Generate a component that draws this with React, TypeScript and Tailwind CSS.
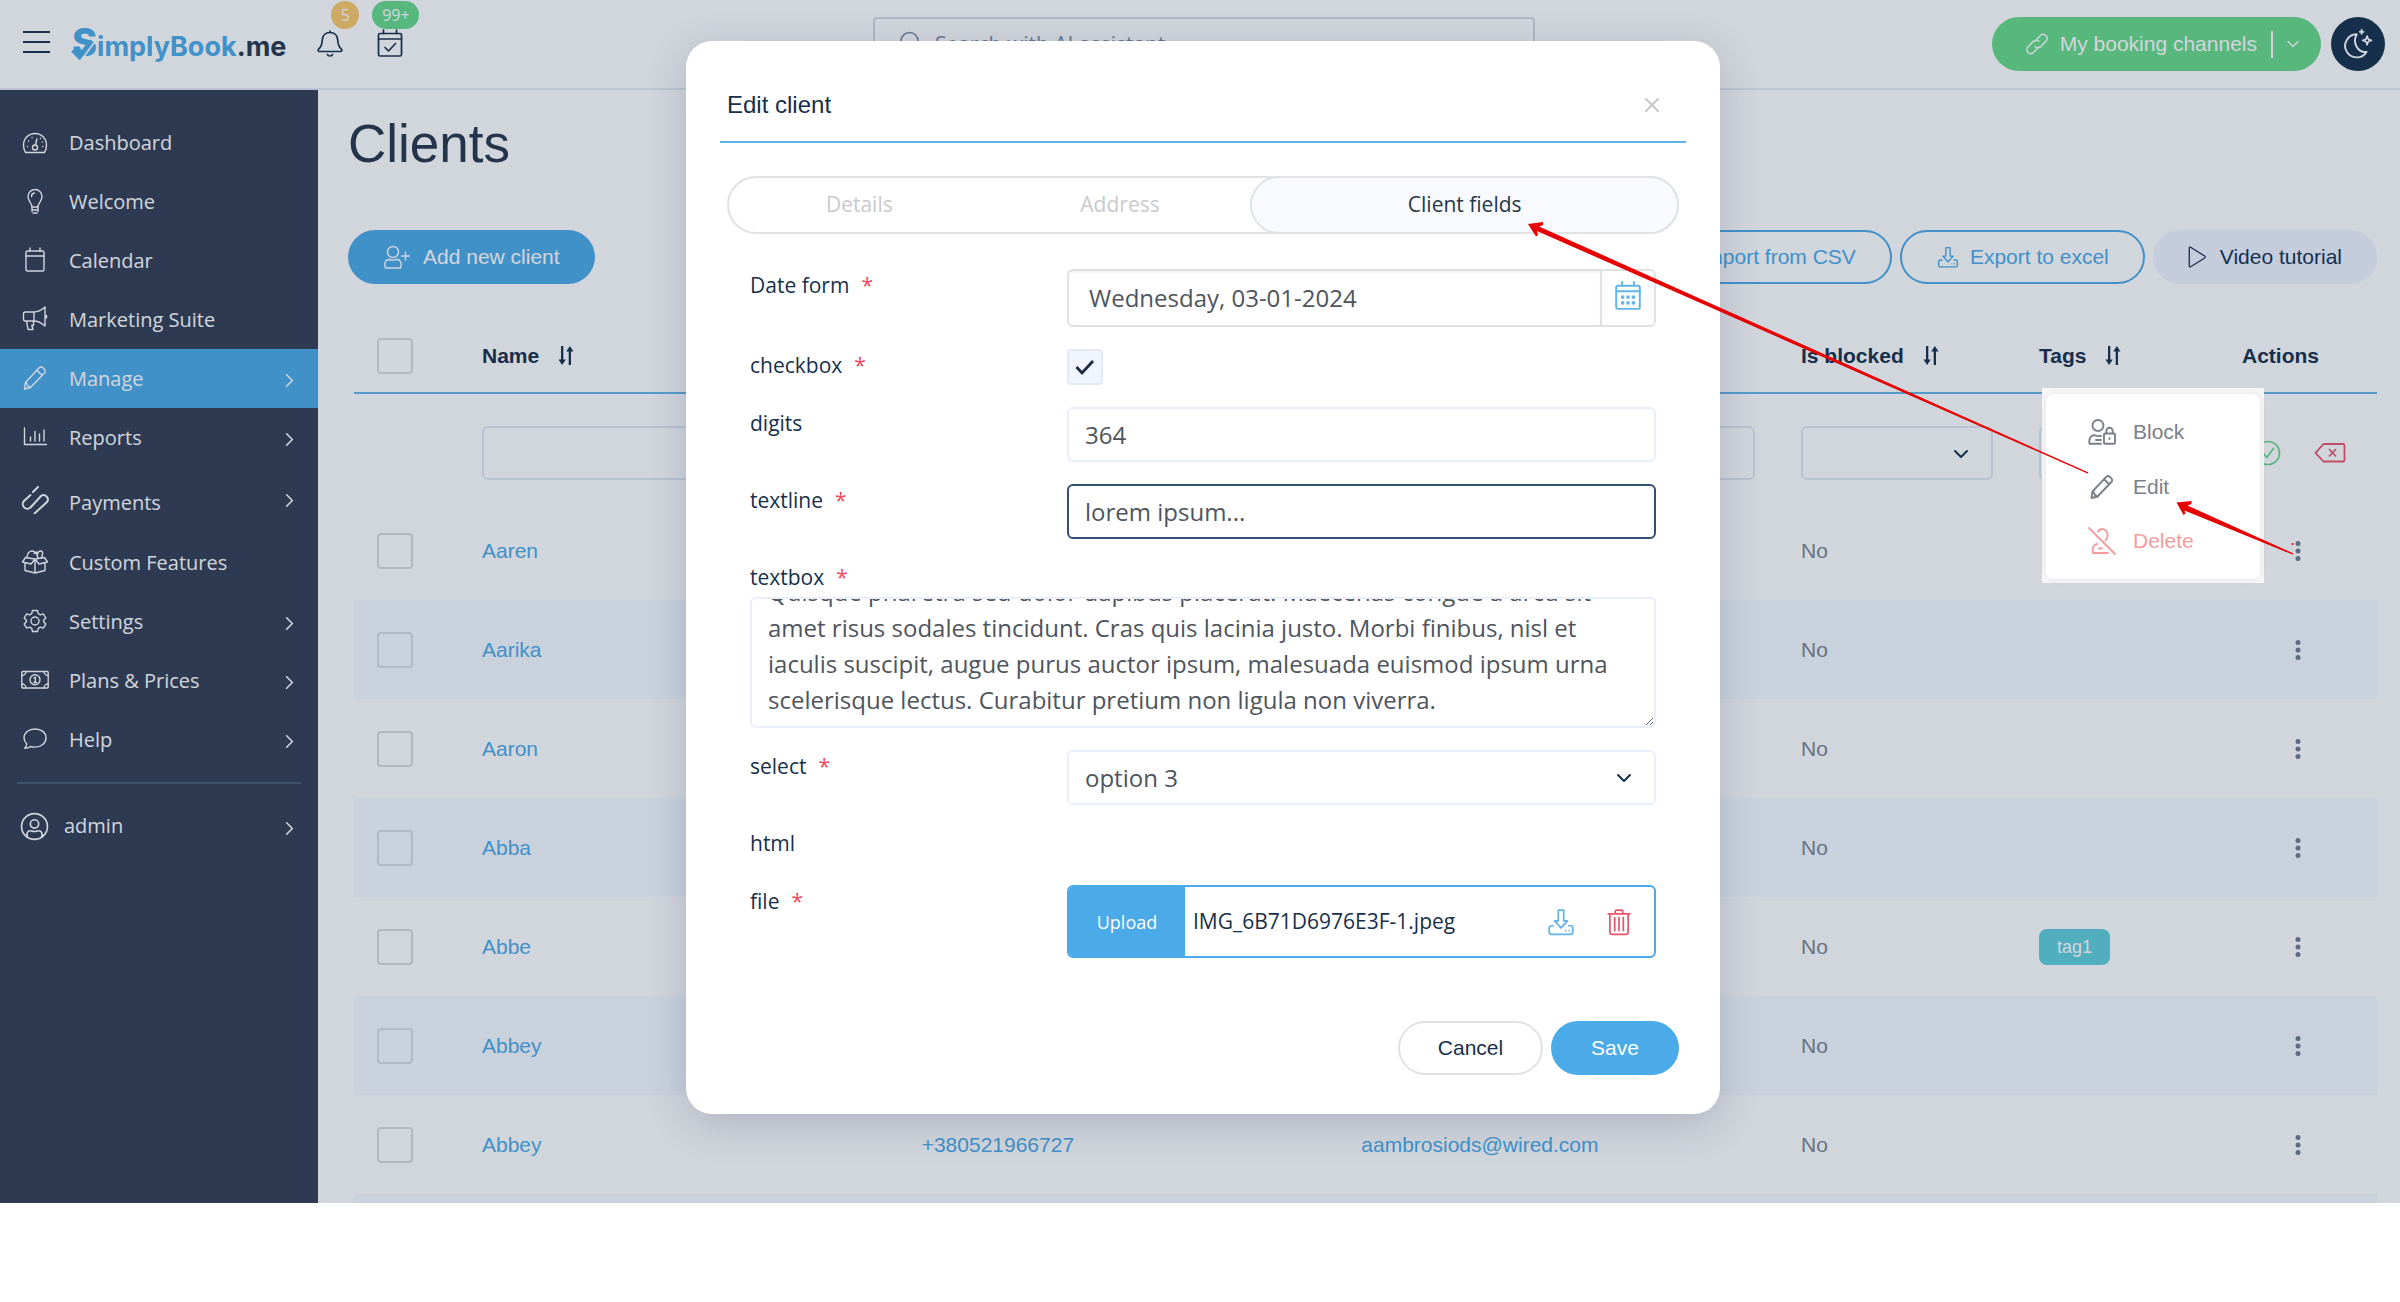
import { useEffect, useRef } from "react";
import type { ReactNode } from "react";
import { ChevronDown, ChevronRight, X } from "lucide-react";
import clsx from "clsx";

type IconProps = { children: ReactNode; className?: string; size?: number; strokeWidth?: number };

function Icon({ children, className, size = 28, strokeWidth = 1.6 }: IconProps) {
  return (
    <svg
      width={size}
      height={size}
      viewBox="0 0 28 28"
      fill="none"
      stroke="currentColor"
      strokeWidth={strokeWidth}
      strokeLinecap="round"
      strokeLinejoin="round"
      className={clsx("shrink-0", className)}
      aria-hidden="true"
    >
      {children}
    </svg>
  );
}

const pencilShape = (
  <>
    <path d="M3.500 25l1-6.500L18.200 3.800a2.600 2.600 0 0 1 3.700 0l1.500 1.500a2.600 2.600 0 0 1 0 3.700L9.500 23.500z" />
    <path d="M16 6.200l5.200 5M4.500 18.500l1.500 1.200.8 2.200 2.700 1.600" />
  </>
);

const downloadShape = (
  <>
    <path d="M11.500 3h5v10h3.500L14 19.500 8 13h3.500z" />
    <path d="M6.800 17.500H5a2 2 0 0 0-2 2v4a2 2 0 0 0 2 2h18a2 2 0 0 0 2-2v-4a2 2 0 0 0-2-2h-1.800" />
    <path d="M18.500 22h.1M21.700 22h.1" />
  </>
);

const navItems = [
  {
    label: "Dashboard",
    arrow: false,
    icon: (
      <>
        <path d="M4.500 24.500h19c1.300-2 2-4.500 2-7.500a11.500 11.500 0 0 0-23 0c0 3 .7 5.500 2 7.500z" />
        <circle cx="14" cy="19.500" r="2.500" />
        <path d="M14.500 17l1.300-6M6.500 18.500h.1M7.500 13h.1M11 9.500h.1M19.500 10.500h.1M21.300 14h.1M21.800 18.500h.1" />
      </>
    ),
  },
  {
    label: "Welcome",
    arrow: false,
    icon: (
      <>
        <path d="M11 20c0-4-4-5.500-4-10.500a7 7 0 0 1 14 0C21 14.500 17 16 17 20z" />
        <path d="M11 23h6M12 26h4M10.500 9.500A3.500 3.500 0 0 1 13.500 6M11 20v4.500M17 20v4.500" />
      </>
    ),
  },
  {
    label: "Calendar",
    arrow: false,
    icon: (
      <>
        <rect x="5" y="5" width="18" height="20" rx="1.500" />
        <path d="M5 10h18M9 2v3M19 2v3" />
      </>
    ),
  },
  {
    label: "Marketing Suite",
    arrow: false,
    icon: (
      <path d="M13 7H4.500A2 2 0 0 0 2.500 9v5a2 2 0 0 0 2 2H13zM13 7c4 0 7-1.500 11-5v19c-4-3.500-7-5-11-5M25.500 10.500v2.500M5.500 16l1.500 8.500h5l-1.200-4h1.700V16" />
    ),
  },
  { label: "Manage", arrow: true, active: true, icon: pencilShape },
  {
    label: "Reports",
    arrow: true,
    icon: <path d="M3.500 5v16.500h22M9.500 18v-4M14 18V8.500M18.500 18v-7M23 18V7" />,
  },
  {
    label: "Payments",
    arrow: true,
    tall: true,
    icon: (
      <path
        strokeWidth="2"
        d="M17 1l-5 5M9.500 9l-6.500 6a4.600 4.600 0 0 0 6.500 6.500L20 10a4.300 4.300 0 0 1 6 6L13.500 27.500"
      />
    ),
  },
  {
    label: "Custom Features",
    arrow: false,
    icon: (
      <>
        <path d="M14 11v14M4 15v7.500L14 25l10-2.500V15M4.500 9.500L14 11l9.500-1.500L26.500 14l-8.500 2-4-5-4 5-8.500-2z" />
        <path d="M6 9c0-3.500 2.500-6 5-6 3 0 5 2.500 6 7M16.500 6c1-4 6-4 5 0L20.500 10M13 5.500L16 4" />
      </>
    ),
  },
  {
    label: "Settings",
    arrow: true,
    icon: (
      <>
        <circle cx="14" cy="14" r="4" />
        <path d="M11.500 3.500h5l.8 3.200 2 1.100 3-.9 2.500 4.100-2.200 2.200v1.600l2.200 2.300-2.500 4-3-.9-2 1.200-.8 3.100h-5l-.8-3.100-2-1.200-3 .9-2.500-4 2.200-2.300v-1.600L3.200 11l2.500-4.100 3 .9 2-1.100z" />
      </>
    ),
  },
  {
    label: "Plans & Prices",
    arrow: true,
    icon: (
      <>
        <rect x="0.800" y="5.500" width="26.400" height="16.500" rx="1" />
        <circle cx="14" cy="13.800" r="5" />
        <path d="M13 12l1.300-.8v5.300M12.800 16.500h2.800M1 9.500a4 4 0 0 0 4-4M27 9.500a4 4 0 0 1-4-4M1 18a4 4 0 0 1 4 4M27 18a4 4 0 0 0-4 4" />
      </>
    ),
  },
  {
    label: "Help",
    arrow: true,
    icon: (
      <path d="M14 4c-6.200 0-11 3.800-11 8.800 0 2.600 1 4.600 2.800 6.200-.3 1.700-1 3.200-2 4.300 2.200 0 4.200-.7 5.700-1.800 1.400.4 2.900.6 4.500.6 6.200 0 11-4 11-9.300S20.200 4 14 4z" />
    ),
  },
];

const clients = [
  { name: "Aaren", phone: "", email: "", tag: "" },
  { name: "Aarika", phone: "", email: "", tag: "" },
  { name: "Aaron", phone: "", email: "", tag: "" },
  { name: "Abba", phone: "", email: "", tag: "" },
  { name: "Abbe", phone: "", email: "", tag: "tag1" },
  { name: "Abbey", phone: "", email: "", tag: "" },
  { name: "Abbey", phone: "+380521966727", email: "aambrosiods@wired.com", tag: "" },
];

const loremText =
  "Lorem ipsum dolor sit amet, consectetur adipiscing elit.\nQuisque pharetra sed dolor dapibus placerat. Maecenas congue a arcu sit amet risus sodales tincidunt. Cras quis lacinia justo. Morbi finibus, nisl et iaculis suscipit, augue purus auctor ipsum, malesuada euismod ipsum urna scelerisque lectus. Curabitur pretium non ligula non viverra.";

function Logo() {
  return (
    <a href="#" className="relative flex items-baseline whitespace-nowrap font-[Inter,sans-serif] text-[27px] leading-10 font-bold text-[#4baae8]">
      <span className="text-[38px] font-extrabold leading-10">S</span>
      <span>implyBook</span>
      <span className="text-[#27364a]">.me</span>
      {/* tick that cuts through the initial */}
      <svg width="30" height="40" viewBox="0 0 30 40" fill="none" className="absolute top-0.5 -left-0.5" aria-hidden="true">
        <path d="M3 26l6.500 6.500L22 17" stroke="currentColor" strokeWidth="5" />
        <path d="M12 35L27 15" stroke="#fff" strokeWidth="1.500" />
      </svg>
    </a>
  );
}

function Header() {
  return (
    <header className="grid h-[90px] shrink-0 grid-cols-[1fr_662px_1fr] items-center border-b-2 border-[#e6ebf5] pr-[15px] pl-[23px]">
      <div className="flex items-center">
        <button aria-label="Menu" className="mr-[22px] mb-1 flex h-[22px] w-[27px] flex-col justify-between text-[#16304b]">
          <span className="h-0.5 w-full bg-current"></span>
          <span className="h-0.5 w-full bg-current"></span>
          <span className="h-0.5 w-full bg-current"></span>
        </button>
        <Logo />
        <button aria-label="Notifications" className="relative mb-0.5 ml-[30px] text-[#16304b]">
          <Icon strokeWidth={1.700}>
            <path d="M14 2v1.500M3.500 22.500c-1.500 0-1.800-1.500-.8-2.500C5.500 17.500 6 16 6.200 11.500c.2-5 3.300-8 7.800-8s7.600 3 7.800 8c.2 4.500.7 6 3.500 8.500 1 1 .7 2.500-.8 2.500zM11.500 25.500c.5 2 4.500 2 5 0" />
          </Icon>
          <span className="absolute -top-7 left-[15px] flex size-7 items-center justify-center rounded-full bg-[#fac868] text-base text-white">5</span>
        </button>
        <button aria-label="Bookings" className="relative mb-0.5 ml-8 text-[#16304b]">
          <Icon strokeWidth={1.700}>
            <rect x="2.500" y="4.500" width="23" height="22.500" rx="1.500" />
            <path d="M2.500 10h23M7.500 1v3.500M20.500 1v3.500M9 18.500l3.500 3.500 7-7.500" />
          </Icon>
          <span className="absolute -top-7 -left-1 flex h-7 w-[47px] items-center justify-center rounded-full bg-[#67da87] text-base text-white">99+</span>
        </button>
      </div>
      <div className="relative">
        <Icon className="absolute top-[13px] left-6 text-[#7a8ba3]" strokeWidth={1.700}>
          <circle cx="12.500" cy="11" r="8.500" />
          <path d="M18.500 17l6 6" />
        </Icon>
        <input
          aria-label="Search"
          placeholder="Search with AI assistant"
          className="h-[54px] w-full rounded border-2 border-[#d6dae1] bg-transparent pl-[60px] text-[21px] placeholder:text-[#7a8ba3]"
        />
      </div>
      <div className="flex items-center justify-end gap-2.5 font-['Liberation_Sans',sans-serif]">
        <button className="flex h-[54px] items-center rounded-full bg-[#67da87] pr-[18px] pl-8 text-[21px] text-white">
          <Icon size={26} className="mr-2.5" strokeWidth={1.500}>
            <path d="M12 11l6-6.500a4.300 4.300 0 0 1 6 6L18 17a4.300 4.300 0 0 1-6 0M16 17l-6 6.500a4.300 4.300 0 0 1-6-6L10 11a4.300 4.300 0 0 1 6 0" />
          </Icon>
          My booking channels
          <span className="mr-2.5 ml-3.5 h-[27px] w-0.5 bg-white"></span>
          <ChevronDown className="size-5" strokeWidth={1.500} />
        </button>
        <button aria-label="Dark mode" className="flex size-[54px] items-center justify-center rounded-full bg-[#16304b] text-white">
          <Icon size={34} strokeWidth={1.600}>
            <path d="M13 6a9.500 9.500 0 1 0 8 14.500C14 21.500 9 13 13 6z" />
            <path d="M21.500 7.500c.4 2.500 1 3.100 3.500 3.500-2.500.4-3.100 1-3.500 3.500-.4-2.500-1-3.100-3.500-3.500 2.500-.4 3.100-1 3.500-3.500zM17 2.500v3M15.500 4h3" />
          </Icon>
        </button>
      </div>
    </header>
  );
}

function Sidebar() {
  return (
    <nav className="w-[318px] shrink-0 bg-[#323e52] pt-[23px] text-xl text-white">
      {navItems.map((item) => (
        <a
          key={item.label}
          href="#"
          className={clsx(
            "flex items-center pr-[17px] pl-[21px]",
            item.tall ? "h-[66px]" : "h-[59px]",
            item.active && "bg-[#4baae8]"
          )}
        >
          <Icon className={clsx(!item.tall && "mb-0.5")} strokeWidth={1.400}>{item.icon}</Icon>
          <span className={clsx("ml-5 flex-1", item.tall && "pt-1.5")}>{item.label}</span>
          {item.arrow && <ChevronRight className={clsx("size-[23px]", !item.tall && "mt-1")} strokeWidth={1.700} />}
        </a>
      ))}
      <hr className="mx-[17px] mt-[13px] mb-3 border-t-2 border-[#4a5b74]" />
      <a href="#" className="flex h-[60px] items-center pr-[17px] pl-[20px]">
        <Icon strokeWidth={1.600} size={29}>
          <circle cx="14" cy="14" r="12.500" />
          <circle cx="14" cy="11.500" r="4" />
          <path d="M7 23.500c-1.200-4 1.500-6 4-5.200 2 .7 4 .7 6 0 2.500-.8 5.200 1.200 4 5.200" />
        </Icon>
        <span className="ml-[15px] flex-1">admin</span>
        <ChevronRight className="mt-1 size-[23px]" strokeWidth={1.700} />
      </a>
    </nav>
  );
}

function SortIcon() {
  return (
    <svg width="18" height="19" viewBox="0 0 18 19" fill="currentColor" className="mb-1 ml-[18px] inline-block" aria-hidden="true">
      <path d="M4 0h2.300v13.500h2.500L5.100 19 1.500 13.500H4zM11.700 19H14V5.500h2.500L12.900 0 9.200 5.500h2.500z" />
    </svg>
  );
}

function RowCheckbox({ label }: { label: string }) {
  return (
    <input
      type="checkbox"
      aria-label={label}
      className="block size-9 appearance-none rounded border-2 border-[#d8dce0] bg-transparent"
    />
  );
}

function ClientsTable() {
  const filterClass = "block h-[54px] w-full rounded-md border-2 border-[#e2e8f3] bg-transparent px-3";
  return (
    <table className="mt-[35px] ml-1.5 w-[calc(100%-6px)] table-fixed text-left text-[21px]">
      <colgroup>
        <col className="w-[105px]" />
        <col />
        <col />
        <col />
        <col className="w-[238px]" />
        <col className="w-[203px]" />
        <col className="w-[158px]" />
      </colgroup>
      <thead className="text-[#16304b]">
        <tr className="h-[74px] border-b-2 border-[#66b6ea]">
          <th className="px-[23px]"><RowCheckbox label="Select all" /></th>
          <th className="px-[23px]">Name<SortIcon /></th>
          <th className="px-[23px]">Phone<SortIcon /></th>
          <th className="px-[23px]">Email<SortIcon /></th>
          <th className="px-[23px]">Is blocked<SortIcon /></th>
          <th className="px-[23px]">Tags<SortIcon /></th>
          <th className="px-[23px]">Actions</th>
        </tr>
        <tr className="h-[108px] align-top">
          <td className="px-[23px]"></td>
          <td className="px-[23px] pt-8"><input aria-label="Filter by name" className={filterClass} /></td>
          <td className="px-[23px] pt-8"><input aria-label="Filter by phone" className={filterClass} /></td>
          <td className="px-[23px] pt-8"><input aria-label="Filter by email" className={filterClass} /></td>
          <td className="px-[23px] pt-8">
            <div className="relative">
              <select aria-label="Filter by blocked" className={clsx(filterClass, "appearance-none")} />
              <ChevronDown className="pointer-events-none absolute top-4 right-5 size-6" strokeWidth={2} />
            </div>
          </td>
          <td className="px-[23px] pt-8"><input aria-label="Filter by tag" className={filterClass} /></td>
          <td className="pt-8 pl-1">
            <div className="flex h-[54px] items-center justify-center gap-8">
              <button aria-label="Apply filter" className="text-[#67da87]">
                <Icon strokeWidth={1.700}>
                  <circle cx="14" cy="14" r="11.500" />
                  <path d="M9 14l3.800 4.500L19.500 9.500" />
                </Icon>
              </button>
              <button aria-label="Clear filter" className="text-[#e8546c]">
                <svg width="32" height="22" viewBox="0 0 32 22" fill="none" stroke="currentColor" strokeWidth="1.800" strokeLinejoin="round" aria-hidden="true">
                  <path d="M9.500 2H29a1.500 1.500 0 0 1 1.500 1.500v14.500a1.500 1.500 0 0 1-1.500 1.500H9.500L1.500 10.800z" />
                  <path d="M15 7l7 7.500M22 7l-7 7.500" />
                </svg>
              </button>
            </div>
          </td>
        </tr>
      </thead>
      <tbody>
        {clients.map((client, index) => (
          <tr key={index} className="h-[99px] even:bg-[#f5faff]">
            <td className="px-[23px]"><RowCheckbox label={`Select ${client.name}`} /></td>
            <td className="px-[23px]"><a href="#" className="text-[#4baae8]">{client.name}</a></td>
            <td className="px-[23px]"><a href="#" className="text-[#4baae8]">{client.phone}</a></td>
            <td className="px-[23px]"><a href="#" className="text-[#4baae8]">{client.email}</a></td>
            <td className="px-[23px] text-[#7a8492]">No</td>
            <td className="px-[23px]">
              {client.tag && (
                <span className="inline-flex h-9 items-center rounded-lg bg-[#5ecfdb] px-[18px] text-lg text-white">{client.tag}</span>
              )}
            </td>
            <td>
              <button aria-label={`Actions for ${client.name}`} className="mx-auto block text-[#6f7b8e]">
                <svg width="8" height="22" viewBox="0 0 8 22" fill="currentColor" aria-hidden="true">
                  <circle cx="4" cy="3.500" r="2.500" />
                  <circle cx="4" cy="11" r="2.500" />
                  <circle cx="4" cy="18.500" r="2.500" />
                </svg>
              </button>
            </td>
          </tr>
        ))}
        <tr className="h-[99px] even:bg-[#f5faff]">
          <td colSpan={7}></td>
        </tr>
      </tbody>
    </table>
  );
}

function ClientsPage() {
  return (
    <main className="min-w-0 flex-1 overflow-hidden pt-6 pr-[23px] pl-[30px] font-['Liberation_Sans',sans-serif]">
      <h1 className="text-[53px] leading-[60px] text-[#27364a]">Clients</h1>
      <div className="mt-14 flex gap-2 text-[21px]">
        <button className="mr-auto flex h-[54px] items-center rounded-full bg-[#4baae8] px-[35px] text-white">
          <Icon className="mr-3" size={28} strokeWidth={1.400}>
            <circle cx="10" cy="9" r="5.500" />
            <path d="M2.500 25c-2-6 1-9 4-8.500 2.300.8 4.700.8 7 0 3-.5 6 2.500 4 8.500zM18.500 13h8M22.500 9v8" />
          </Icon>
          Add new client
        </button>
        <button className="flex h-[54px] items-center rounded-full border-2 border-[#4baae8] px-[34px] text-[#4baae8]">
          <Icon className="mr-2.5" size={24}>{downloadShape}</Icon>
          Import from CSV
        </button>
        <button className="flex h-[54px] items-center rounded-full border-2 border-[#4baae8] px-[34px] text-[#4baae8]">
          <Icon className="mr-2.5" size={24}>{downloadShape}</Icon>
          Export to excel
        </button>
        <button className="flex h-[54px] items-center rounded-full bg-[#f1f5ff] px-[35px] text-[#16304b]">
          <Icon className="mr-2" size={24} strokeWidth={1.500}>
            <path d="M1.500 3.500v21c0 1 .8 1.400 1.600.9L19.500 15.200c.9-.6.9-1.700 0-2.300L3.100 2.700C2.300 2.200 1.500 2.500 1.500 3.500z" />
          </Icon>
          Video tutorial
        </button>
      </div>
      <ClientsTable />
    </main>
  );
}

type FieldProps = { id: string; label: string; required?: boolean; children?: ReactNode };

function Field({ id, label, required, children }: FieldProps) {
  return (
    <div className="grid grid-cols-[317px_1fr] items-start">
      <label htmlFor={id} className="leading-8">
        {label}
        {required && <span className="ml-3 text-[#f0485f]">*</span>}
      </label>
      {children}
    </div>
  );
}

function EditClientModal() {
  const textboxRef = useRef<HTMLTextAreaElement>(null);

  useEffect(() => {
    if (textboxRef.current) {
      textboxRef.current.scrollTop = textboxRef.current.scrollHeight;
    }
  }, []);

  const inputClass = "h-[55px] w-full rounded-md border-2 bg-white px-4 text-2xl text-[#4e555d] outline-none";

  return (
    <div
      role="dialog"
      aria-labelledby="modal-title"
      className="w-[1034px] rounded-[26px] bg-white text-[21px] text-[#16304b] shadow-[0_10px_40px_rgba(20,40,75,0.18)]"
    >
      <div className="mx-[34px] flex h-[102px] items-center justify-between border-b-2 border-[#5fb4ea] pt-[27px] pr-[22px] pl-[7px]">
        <h2 id="modal-title" className="font-['Liberation_Sans',sans-serif] text-2xl">Edit client</h2>
        <button aria-label="Close" className="text-[#c4c7cb]">
          <X className="size-6" strokeWidth={2} />
        </button>
      </div>

      <div role="tablist" className="mx-[41px] mt-[33px] grid h-[58px] grid-cols-[11fr_11fr_18fr] rounded-full border-2 border-[#e1e2e4]">
        <button role="tab" className="text-[#c8cacd]">Details</button>
        <button role="tab" className="text-[#c8cacd]">Address</button>
        <button role="tab" aria-selected="true" className="-my-0.5 -mr-0.5 rounded-full border-2 border-[#e1e2e4] bg-[#f8faff] text-[#27364a]">Client fields</button>
      </div>

      <form className="mt-[35px] flex flex-col gap-[22px] px-16">
        <Field id="date-form" label="Date form" required>
          <div className="flex h-[58px] rounded-md border-2 border-[#dfe1e3]">
            <input
              id="date-form"
              defaultValue="Wednesday, 03-01-2024"
              className="min-w-0 flex-1 px-5 text-2xl text-[#4e555d] shadow-[inset_0_2px_2px_rgba(0,0,0,0.05)] outline-none"
            />
            <button type="button" aria-label="Open calendar" className="flex w-[54px] items-center justify-center border-l-2 border-[#dfe1e3] pb-1 text-[#5fb4ea]">
              <Icon size={30} strokeWidth={1.800}>
                <rect x="3" y="4.500" width="22" height="21.500" rx="1.500" />
                <path d="M3 9.500h22M8.500 1v3.500M19.500 1v3.500" />
                <path strokeWidth="3" strokeLinecap="butt" d="M7.500 15h3M12.500 15h3M17.500 15h3M7.500 20.500h3M12.500 20.500h3M17.500 20.500h3" />
              </Icon>
            </button>
          </div>
        </Field>

        <Field id="checkbox-field" label="checkbox" required>
          <div className="relative size-9">
            <input
              id="checkbox-field"
              type="checkbox"
              defaultChecked
              className="peer block size-9 appearance-none rounded border-2 border-[#e3e9f7] bg-[#f1f5ff]"
            />
            <svg width="20" height="18" viewBox="0 0 20 18" fill="none" stroke="#1d2a42" strokeWidth="2.800" className="pointer-events-none absolute top-2.5 left-2 hidden peer-checked:block" aria-hidden="true">
              <path d="M1.500 8l5.500 6L18 2" />
            </svg>
          </div>
        </Field>

        <Field id="digits" label="digits">
          <input id="digits" defaultValue="364" className={clsx(inputClass, "border-[#e9eef9]")} />
        </Field>

        <Field id="textline" label="textline" required>
          <input id="textline" defaultValue="lorem ipsum..." className={clsx(inputClass, "border-[#35506e]")} />
        </Field>

        <div>
          <label htmlFor="textbox" className="mb-1 block leading-8">
            textbox<span className="ml-3 text-[#f0485f]">*</span>
          </label>
          <textarea
            id="textbox"
            ref={textboxRef}
            defaultValue={loremText}
            className="block h-[131px] w-full resize rounded-md border-2 border-[#e9eef9] px-4 py-2 text-2xl leading-9 text-[#4e555d] outline-none [scrollbar-width:none]"
          />
        </div>

        <Field id="select-field" label="select" required>
          <div className="relative">
            <select id="select-field" defaultValue="3" className={clsx(inputClass, "appearance-none border-[#e9eef9]")}>
              <option value="1">option 1</option>
              <option value="2">option 2</option>
              <option value="3">option 3</option>
            </select>
            <ChevronDown className="pointer-events-none absolute top-4 right-5 size-6" strokeWidth={2} />
          </div>
        </Field>

        <p className="h-9 leading-8">html</p>

        <Field id="file-field" label="file" required>
          <div className="flex h-[73px] items-center overflow-hidden rounded-md border-2 border-[#4baae8]">
            <label htmlFor="file-field" className="flex w-[116px] items-center justify-center self-stretch bg-[#4baae8] text-lg text-white">
              Upload
            </label>
            <input id="file-field" type="file" className="sr-only" />
            <span className="ml-2 flex-1">IMG_6B71D6976E3F-1.jpeg</span>
            <button type="button" aria-label="Download file" className="mr-7 text-[#5fb4ea]">
              <Icon size={30}>{downloadShape}</Icon>
            </button>
            <button type="button" aria-label="Remove file" className="mr-5 text-[#ee5468]">
              <Icon size={30}>
                <path d="M4 6.500h20M10.500 6V4.500A1.500 1.500 0 0 1 12 3h4a1.500 1.500 0 0 1 1.500 1.500V6M5.500 6.500V23.500a2 2 0 0 0 2 2h13a2 2 0 0 0 2-2V6.500M10 10v12M14 10v12M18 10v12" />
              </Icon>
            </button>
          </div>
        </Field>
      </form>

      <div className="mt-[63px] flex justify-end gap-2 pr-[41px] pb-[39px] font-['Liberation_Sans',sans-serif]">
        <button className="h-[54px] w-[145px] rounded-full border-2 border-[#e1e2e4]">Cancel</button>
        <button className="h-[54px] w-[128px] rounded-full bg-[#4baae8] text-white">Save</button>
      </div>
    </div>
  );
}

function ActionsMenu() {
  return (
    <div className="absolute top-[388px] right-[136px] w-[222px] bg-[#f7f7f7] px-1 pt-1.5 pb-1 font-['Liberation_Sans',sans-serif] text-[21px] text-[#7b8088]">
      <div role="menu" className="flex flex-col rounded-lg bg-white px-[42px] pt-[11px] pb-[11px] shadow-[0_0_8px_rgba(0,0,0,0.08)]">
        <button role="menuitem" className="flex h-[54px] items-center gap-[17px]">
          <Icon strokeWidth={1.900}>
            <circle cx="10" cy="7.500" r="5.500" />
            <path d="M13 18c-2 .3-4 0-6-.6-3-.6-6.500 2-5.500 8.300H13M8 22h5" />
            <rect x="16" y="15.500" width="11" height="10.200" rx="1" />
            <path d="M18.300 15.500V13a3.200 3.200 0 0 1 6.400 0v2.500M21.500 20.200v.8" />
          </Icon>
          Block
        </button>
        <button role="menuitem" className="flex h-[55px] items-center gap-[17px]">
          <Icon strokeWidth={1.900}>{pencilShape}</Icon>
          Edit
        </button>
        <button role="menuitem" className="flex h-[54px] items-center gap-[17px] text-[#f59c9c]">
          <Icon strokeWidth={1.900}>
            <path d="M1 1l26 26M10 4.500C12.500 0 20 2 19.500 9c-.2 2-.8 3.300-2 4.300M9.500 17c-3.500 0-5.500 3-4.500 9h15M11 21.500h3" />
          </Icon>
          Delete
        </button>
      </div>
    </div>
  );
}

/* Tapered pointers: row menu -> Edit, Edit -> Client fields tab */
function Pointers() {
  return (
    <svg
      width="776"
      height="346"
      viewBox="1520 215 776 346"
      fill="#e60000"
      className="pointer-events-none absolute top-[215px] right-[104px]"
      aria-hidden="true"
    >
      <path d="M1528 224l15-2 0 3-4 1.500L2088.500 472.500l-1 1L1537 231l1 4-2 1.500z" />
      <path d="M2176.500 502.500l15-1.500 0 3-4 1.500L2293.500 553.500l-1 1L2184.500 510.500l1 3-2 1.500z" />
      <circle cx="2292.500" cy="544" r="1" />
    </svg>
  );
}

export default function App() {
  return (
    <div className="h-screen bg-white pb-[99px] font-['Open_Sans',sans-serif]">
      <div className="relative flex h-full flex-col overflow-hidden">
        <Header />
        <div className="flex min-h-0 flex-1">
          <Sidebar />
          <ClientsPage />
        </div>
        <div className="absolute inset-0 flex items-start justify-center bg-[#192d50]/20 pt-[41px] pl-1.5">
          <EditClientModal />
        </div>
        <ActionsMenu />
        <Pointers />
      </div>
    </div>
  );
}
